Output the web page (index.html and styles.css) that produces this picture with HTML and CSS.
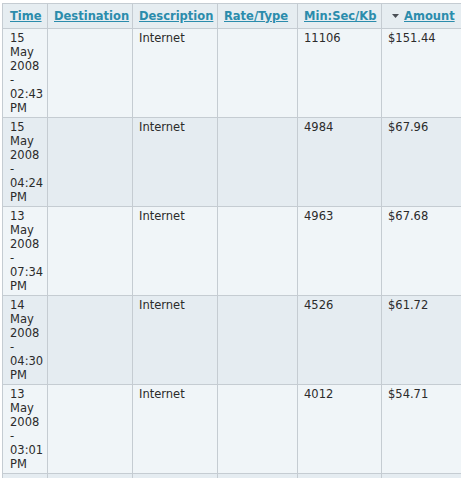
FILE: index.html
```html
<!DOCTYPE html>
<html>
<head>
<meta charset="utf-8">
<link rel="stylesheet" href="styles.css">
</head>
<body>
<table class="calls">
  <colgroup>
    <col class="c-time"><col class="c-dest"><col class="c-desc"><col class="c-rate"><col class="c-min"><col class="c-amt">
  </colgroup>
  <thead>
    <tr>
      <th><a href="#">Time</a></th>
      <th><a href="#">Destination</a></th>
      <th><a href="#">Description</a></th>
      <th><a href="#">Rate/Type</a></th>
      <th><a href="#">Min:Sec/Kb</a></th>
      <th class="sorted"><svg class="arrow" width="7" height="4" viewBox="0 0 7 4"><path d="M0 0H7L3.5 4Z" fill="#4a4f55"/></svg><a href="#">Amount</a></th>
    </tr>
  </thead>
  <tbody>
    <tr class="odd">
      <td>15<br>May<br>2008<br>-<br>02:43<br>PM</td><td></td><td>Internet</td><td></td><td>11106</td><td>$151.44</td>
    </tr>
    <tr class="even">
      <td>15<br>May<br>2008<br>-<br>04:24<br>PM</td><td></td><td>Internet</td><td></td><td>4984</td><td>$67.96</td>
    </tr>
    <tr class="odd">
      <td>13<br>May<br>2008<br>-<br>07:34<br>PM</td><td></td><td>Internet</td><td></td><td>4963</td><td>$67.68</td>
    </tr>
    <tr class="even">
      <td>14<br>May<br>2008<br>-<br>04:30<br>PM</td><td></td><td>Internet</td><td></td><td>4526</td><td>$61.72</td>
    </tr>
    <tr class="odd">
      <td>13<br>May<br>2008<br>-<br>03:01<br>PM</td><td></td><td>Internet</td><td></td><td>4012</td><td>$54.71</td>
    </tr>
    <tr class="even">
      <td></td><td></td><td></td><td></td><td></td><td></td>
    </tr>
  </tbody>
</table>
</body>
</html>
```
FILE: styles.css
```css
html, body {
  margin: 0;
  padding: 0;
  background: #ffffff;
  overflow: hidden;
}
body {
  padding: 3px 0 0 2px;
  font-family: "DejaVu Sans", Verdana, sans-serif;
  font-size: 11.5px;
  color: #2b2b2b;
}
.calls {
  border-collapse: collapse;
  table-layout: fixed;
  width: 459px;
}
.c-time { width: 45px; }
.c-dest { width: 85px; }
.c-desc { width: 85px; }
.c-rate { width: 80px; }
.c-min  { width: 84px; }
.c-amt  { width: 80px; }
.calls th,
.calls td {
  border: 1px solid #c5ccd2;
  padding: 2px 4px 2px 6px;
  text-align: left;
  white-space: nowrap;
  overflow: hidden;
}
.calls th {
  height: 20px;
  background: #e6edf1;
  font-weight: bold;
  vertical-align: middle;
}
.calls th:first-child,
.calls td:first-child {
  padding-left: 7px;
}
.calls th a {
  color: #2b8cac;
  text-decoration: underline;
}
.calls .sorted {
  padding-left: 10px;
}
.arrow {
  display: inline-block;
  margin-right: 5px;
  vertical-align: 2px;
}
.calls td {
  vertical-align: top;
  line-height: 14px;
  height: 84px;
}
.odd td { background: #f0f5f8; }
.even td { background: #e5ecf1; }
```
